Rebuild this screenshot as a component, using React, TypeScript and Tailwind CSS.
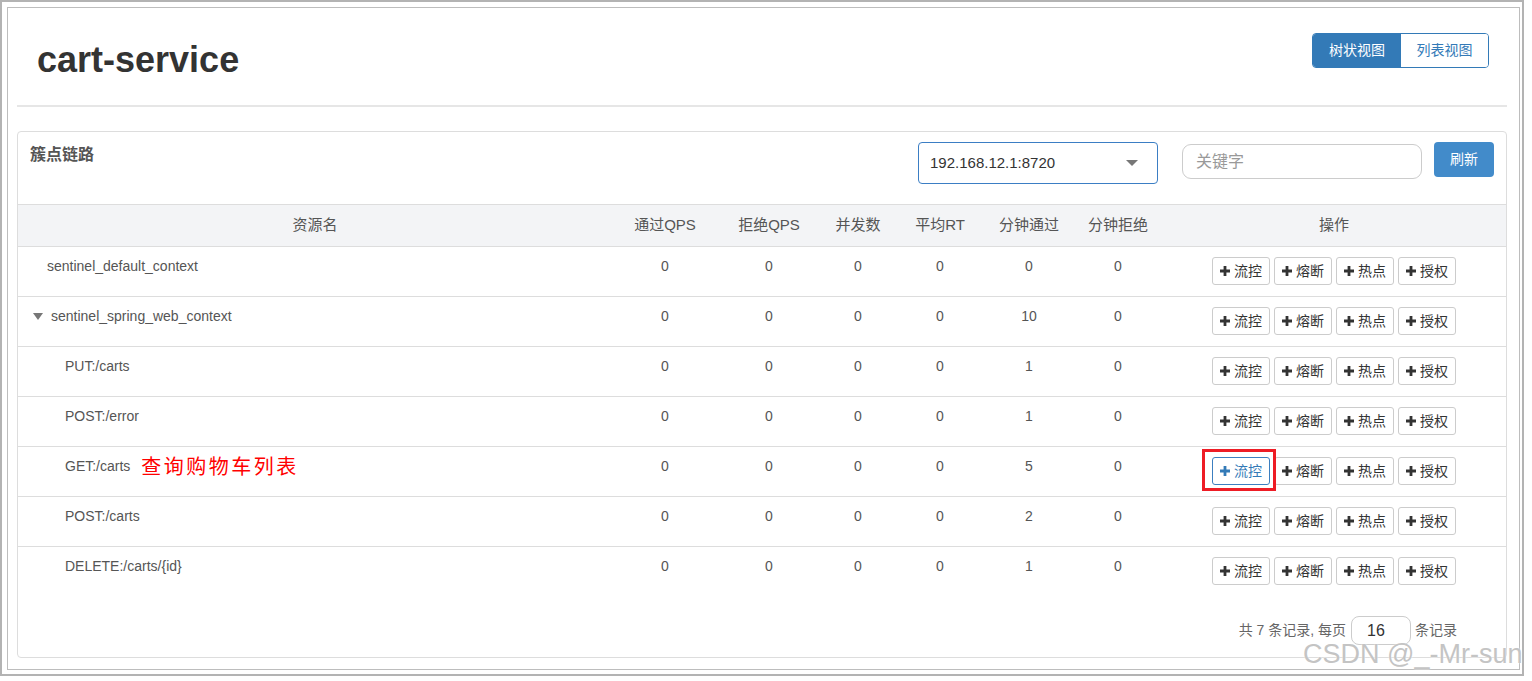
import React from "react";

type Row = {
  name: string;
  pad: string;
  caret?: boolean;
  note?: string;
  hot?: boolean;
  vals: number[];
};

const rows: Row[] = [
  { name: "sentinel_default_context", pad: "pl-[29px]", vals: [0, 0, 0, 0, 0, 0] },
  { name: "sentinel_spring_web_context", pad: "pl-[15px]", caret: true, vals: [0, 0, 0, 0, 10, 0] },
  { name: "PUT:/carts", pad: "pl-[47px]", vals: [0, 0, 0, 0, 1, 0] },
  { name: "POST:/error", pad: "pl-[47px]", vals: [0, 0, 0, 0, 1, 0] },
  { name: "GET:/carts", pad: "pl-[47px]", note: "查询购物车列表", hot: true, vals: [0, 0, 0, 0, 5, 0] },
  { name: "POST:/carts", pad: "pl-[47px]", vals: [0, 0, 0, 0, 2, 0] },
  { name: "DELETE:/carts/{id}", pad: "pl-[47px]", vals: [0, 0, 0, 0, 1, 0] },
];

const heads = ["通过QPS", "拒绝QPS", "并发数", "平均RT", "分钟通过", "分钟拒绝"];
const cols = "grid grid-cols-[594px_106px_102px_76px_88px_90px_88px_1fr]";

function Plus({ color }: { color: string }) {
  return (
    <svg width="10" height="10" viewBox="0 0 10 10" className="shrink-0">
      <path d="M3.6 0h2.8v3.6H10v2.8H6.4V10H3.6V6.4H0V3.6h3.6z" fill={color} />
    </svg>
  );
}

function OpBtn({ label, active }: { label: string; active?: boolean }) {
  return (
    <button
      className={
        "h-[28px] px-[7px] flex items-center gap-[4px] rounded-[3px] border bg-white text-[14px] leading-none " +
        (active ? "border-[#3c7fc0] text-[#337ab7]" : "border-[#ccc] text-[#333]")
      }
    >
      <Plus color={active ? "#337ab7" : "#333"} />
      {label}
    </button>
  );
}

export default function App() {
  return (
    <div className="relative w-[1532px] h-[681px] bg-white font-['Liberation_Sans','Noto_Sans_CJK_SC',sans-serif] overflow-hidden">
      <div className="w-[1524px] h-[676px] border-2 border-[#b3b3b3] pt-[5px] pl-[5px] pr-[2px] pb-[4px]">
        <div className="h-full border border-[#bdbdbd] pl-[9px] pr-[12px]">
          {/* header */}
          <div className="h-[97px] flex justify-between items-start">
            <h1 className="mt-[32px] ml-[20px] text-[36px] leading-[40px] font-bold text-[#333]">cart-service</h1>
            <div className="mt-[25px] mr-[18px] flex h-[35px] rounded-[4px] border border-[#337ab7] overflow-hidden text-[14px]">
              <div className="w-[88px] flex items-center justify-center bg-[#337ab7] text-white">树状视图</div>
              <div className="w-[87px] flex items-center justify-center bg-white text-[#337ab7]">列表视图</div>
            </div>
          </div>
          <div className="h-[2px] bg-[#e6e6e6]" />

          {/* card */}
          <div className="mt-[24px] h-[527px] border border-[#ddd] rounded-[4px]">
            <div className="h-[72px] flex items-start px-[12px]">
              <div className="mt-[11px] text-[16px] leading-[24px] font-semibold text-[#555]">簇点链路</div>
              <div className="ml-auto mt-[10px] w-[240px] h-[42px] rounded-[4px] border border-[#3b7ec4] flex items-center pl-[11px] pr-[19px] text-[15px] text-[#333]">
                <span>192.168.12.1:8720</span>
                <svg width="12" height="6" viewBox="0 0 12 6" className="ml-auto">
                  <path d="M0 0h12L6 6z" fill="#777" />
                </svg>
              </div>
              <div className="ml-[24px] mt-[12px] w-[240px] h-[35px] rounded-[9px] border border-[#ccc] flex items-center pl-[13px] text-[16px] text-[#999]">
                关键字
              </div>
              <button className="ml-[12px] mt-[10px] w-[60px] h-[35px] rounded-[4px] bg-[#428bca] text-white text-[14px]">
                刷新
              </button>
            </div>

            {/* table head */}
            <div className={cols + " h-[43px] items-center border-y border-[#ddd] bg-[#f3f4f6] text-[15px] text-[#555] text-center"}>
              <div>资源名</div>
              {heads.map((h) => (
                <div key={h}>{h}</div>
              ))}
              <div>操作</div>
            </div>

            {/* rows */}
            {rows.map((r, i) => (
              <div
                key={r.name}
                className={cols + " h-[50px] items-start text-[14px] leading-[20px] text-[#555] " + (i < rows.length - 1 ? "border-b border-[#ddd]" : "")}
              >
                <div className={"mt-[9px] h-[20px] flex items-center " + r.pad}>
                  {r.caret && (
                    <svg width="10" height="8" viewBox="0 0 10 8" className="mr-[8px] mt-[2px]">
                      <path d="M0 0h10L5 7z" fill="#777" />
                    </svg>
                  )}
                  <span>{r.name}</span>
                  {r.note && (
                    <span className="ml-[11px] text-[20px] leading-[20px] tracking-[2.5px] text-[#ff0000] font-['Noto_Sans_CJK_SC',serif]">
                      {r.note}
                    </span>
                  )}
                </div>
                {r.vals.map((v, j) => (
                  <div key={j} className="mt-[9px] text-center">
                    {v}
                  </div>
                ))}
                <div className="mt-[10px] flex justify-center gap-[4px]">
                  <div className="relative">
                    <OpBtn label="流控" active={r.hot} />
                    {r.hot && (
                      <span className="absolute -left-[10px] -right-[6px] -top-[8px] -bottom-[6px] border-[3px] border-[#ee1c25]" />
                    )}
                  </div>
                  <OpBtn label="熔断" />
                  <OpBtn label="热点" />
                  <OpBtn label="授权" />
                </div>
              </div>
            ))}

            {/* footer */}
            <div className="mt-[19px] flex justify-end items-center pr-[49px] text-[14px] text-[#666]">
              <span>共 7 条记录, 每页</span>
              <div className="ml-[5px] mr-[4px] w-[60px] h-[29px] rounded-[8px] border border-[#ccc] flex items-center pl-[15px] text-[16px] text-[#333]">
                16
              </div>
              <span>条记录</span>
            </div>
          </div>
        </div>
      </div>

      {/* watermark */}
      <div className="absolute left-[1303px] top-[637px] text-[27px] leading-[34px] text-[#c4c4c4] [text-shadow:0_0_2px_#fff] whitespace-nowrap">
        CSDN @_-Mr-sun
      </div>
    </div>
  );
}
